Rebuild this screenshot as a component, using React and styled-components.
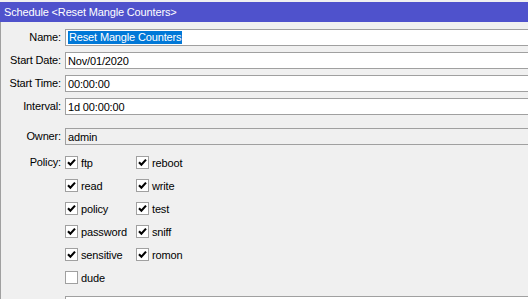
import React from "react";
import styled, { createGlobalStyle } from "styled-components";

const GlobalStyle = createGlobalStyle`
  html, body {
    margin: 0;
    padding: 0;
    background: #f0f0f0;
    overflow: hidden;
  }
  body {
    font-family: "Liberation Sans", Arial, sans-serif;
    font-size: 11px;
    letter-spacing: -0.15px;
    color: #000;
  }
`;

const Window = styled.div`
  width: 528px;
  height: 299px;
  padding-top: 2px;
  box-sizing: border-box;
  background: #f0f0f0;
  display: flex;
  flex-direction: column;
`;

const TitleBar = styled.div`
  height: 20px;
  background: #4f52cc;
  color: #fff;
  display: flex;
  align-items: center;
  padding-left: 4px;
  font-size: 11px;
  white-space: nowrap;
`;

const Body = styled.div`
  flex: 1;
  border-left: 1px solid #a0a0a0;
  padding-top: 7px;
  display: flex;
  flex-direction: column;
  overflow: hidden;
`;

const FieldRow = styled.div`
  display: flex;
  align-items: center;
  height: 17px;
  margin-bottom: ${(p) => p.$gap ?? 6}px;
`;

const Label = styled.div`
  width: 60px;
  text-align: right;
  padding-right: 4px;
  white-space: nowrap;
  line-height: 17px;
`;

const Field = styled.div`
  flex: 1;
  height: 17px;
  box-sizing: border-box;
  border: 1px solid #a0a0a0;
  border-right: none;
  background: ${(p) => (p.$disabled ? "#f0f0f0" : "#fff")};
  display: flex;
  align-items: center;
  padding-left: 2px;
  white-space: nowrap;
`;

const Selected = styled.span`
  background: #0078d7;
  color: #fff;
  padding: 0 1px;
  line-height: 13px;
`;

const Separator = styled.div`
  height: 1px;
  background: #a0a0a0;
  margin: ${(p) => p.$margin};
`;

const PolicyRow = styled.div`
  display: flex;
  align-items: flex-start;
  margin-top: 9px;
`;

const PolicyGrid = styled.div`
  display: grid;
  grid-template-columns: 71px auto;
  grid-auto-rows: 17px;
  row-gap: 6px;
`;

const CheckItem = styled.label`
  display: flex;
  align-items: center;
  gap: 3px;
  white-space: nowrap;
`;

const Box = styled.span`
  width: 13px;
  height: 13px;
  box-sizing: border-box;
  border: 1px solid #a0a0a0;
  background: #fff;
  display: flex;
  align-items: center;
  justify-content: center;
`;

const Tick = () => (
  <svg width="9" height="9" viewBox="0 0 9 9">
    <path d="M1 4.2 L3.4 6.8 L8 1.6" fill="none" stroke="#000" strokeWidth="2.1" />
  </svg>
);

const Check = ({ checked, children }) => (
  <CheckItem>
    <Box>{checked && <Tick />}</Box>
    {children}
  </CheckItem>
);

const policies = [
  ["ftp", true],
  ["reboot", true],
  ["read", true],
  ["write", true],
  ["policy", true],
  ["test", true],
  ["password", true],
  ["sniff", true],
  ["sensitive", true],
  ["romon", true],
  ["dude", false],
];

export default function App() {
  return (
    <>
      <GlobalStyle />
      <Window>
        <TitleBar>Schedule &lt;Reset Mangle Counters&gt;</TitleBar>
        <Body>
          <FieldRow>
            <Label>Name:</Label>
            <Field>
              <Selected>Reset Mangle Counters</Selected>
            </Field>
          </FieldRow>
          <FieldRow>
            <Label>Start Date:</Label>
            <Field>Nov/01/2020</Field>
          </FieldRow>
          <FieldRow>
            <Label>Start Time:</Label>
            <Field>00:00:00</Field>
          </FieldRow>
          <FieldRow $gap={0}>
            <Label>Interval:</Label>
            <Field>1d 00:00:00</Field>
          </FieldRow>
          <Separator $margin="7px 0 6px 7px" />
          <FieldRow $gap={0}>
            <Label>Owner:</Label>
            <Field $disabled>admin</Field>
          </FieldRow>
          <PolicyRow>
            <Label>Policy:</Label>
            <PolicyGrid>
              {policies.map(([name, on]) => (
                <Check key={name} checked={on}>
                  {name}
                </Check>
              ))}
            </PolicyGrid>
          </PolicyRow>
          <Separator $margin="4px 0 6px 7px" />
          <FieldRow $gap={0}>
            <Label />
            <Field />
          </FieldRow>
        </Body>
      </Window>
    </>
  );
}
